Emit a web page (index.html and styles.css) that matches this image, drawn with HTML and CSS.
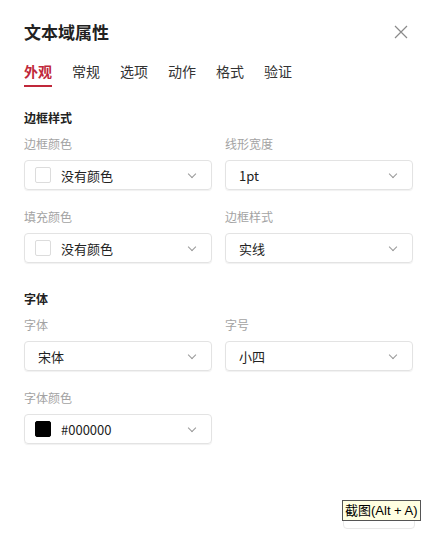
FILE: index.html
```html
<!DOCTYPE html>
<html lang="zh-CN">
<head>
    <meta charset="UTF-8">
    <meta name="viewport" content="width=device-width, initial-scale=1.0">
    <title>文本域属性</title>
    <link rel="stylesheet" href="styles.css">
</head>
<body>

    <div class="dialog">
        <div class="header">
            <h1>文本域属性</h1>
            <span class="close">
                <svg width="14" height="14" viewBox="0 0 14 14"><path d="M1 1L13 13M13 1L1 13" stroke="#8a8a8a" stroke-width="1.2" fill="none"/></svg>
            </span>
        </div>

        <div class="tabs">
            <span class="tab active">外观</span>
            <span class="tab">常规</span>
            <span class="tab">选项</span>
            <span class="tab">动作</span>
            <span class="tab">格式</span>
            <span class="tab">验证</span>
        </div>

        <!-- 边框 -->
        <h2>边框样式</h2>
        <div class="grid">
            <div class="field">
                <label>边框颜色</label>
                <div class="select"><span class="swatch"></span><span class="value">没有颜色</span><span class="arrow"></span></div>
            </div>
            <div class="field">
                <label>线形宽度</label>
                <div class="select"><span class="value">1pt</span><span class="arrow"></span></div>
            </div>
            <div class="field">
                <label>填充颜色</label>
                <div class="select"><span class="swatch"></span><span class="value">没有颜色</span><span class="arrow"></span></div>
            </div>
            <div class="field">
                <label>边框样式</label>
                <div class="select"><span class="value">实线</span><span class="arrow"></span></div>
            </div>
        </div>

        <!-- 字体 -->
        <h2 class="second">字体</h2>
        <div class="grid">
            <div class="field">
                <label>字体</label>
                <div class="select"><span class="value">宋体</span><span class="arrow"></span></div>
            </div>
            <div class="field">
                <label>字号</label>
                <div class="select"><span class="value">小四</span><span class="arrow"></span></div>
            </div>
            <div class="field">
                <label>字体颜色</label>
                <div class="select"><span class="swatch black"></span><span class="value">#000000</span><span class="arrow"></span></div>
            </div>
        </div>

        <div class="footer">
            <span class="btn"></span>
            <span class="tooltip">截图(Alt + A)</span>
        </div>
    </div>

</body>
</html>
```

FILE: styles.css
```css
body {
    margin: 0;
    background: #fff;
    font-family: "Noto Sans CJK SC", "Noto Sans", sans-serif;
    color: #333;
}
.dialog {
    position: relative;
    height: 552px;
    padding: 20px 25px 0 24px;
    box-sizing: border-box;
}
.header {
    display: flex;
    align-items: center;
    justify-content: space-between;
    height: 24px;
}
h1 {
    margin: 0;
    font-size: 17px;
    font-weight: bold;
    line-height: 24px;
    color: #222;
}
.close {
    display: flex;
    margin-right: 5px;
}
.tabs {
    display: flex;
    gap: 20px;
    margin-top: 17px;
}
.tab {
    font-size: 14px;
    line-height: 20px;
    height: 24px;
    color: #333;
}
.tab.active {
    color: #c0283a;
    font-weight: bold;
    border-bottom: 2px solid #c0283a;
}
h2 {
    margin: 21px 0 6px;
    font-size: 12px;
    font-weight: bold;
    line-height: 20px;
    color: #222;
}
h2.second {
    margin-top: 26px;
}
.grid {
    display: grid;
    grid-template-columns: 1fr 1fr;
    column-gap: 13px;
    row-gap: 17px;
}
.field label {
    display: block;
    font-size: 12px;
    line-height: 20px;
    color: #a3a3a3;
    margin-bottom: 6px;
}
.select {
    display: flex;
    align-items: center;
    height: 30px;
    box-sizing: border-box;
    border: 1px solid #e3e3e3;
    border-radius: 4px;
    box-shadow: 0 1px 1px rgba(0,0,0,0.06);
    padding: 0 12px 0 10px;
}
.swatch {
    width: 16px;
    height: 16px;
    box-sizing: border-box;
    border: 1px solid #dcdcdc;
    border-radius: 2px;
    margin-right: 7px;
}
.swatch.black {
    background: #000;
    border-color: #000;
}
.value {
    flex: 1;
    font-size: 13px;
    color: #222;
    padding-left: 3px;
}
.arrow {
    width: 5px;
    height: 5px;
    border-right: 1px solid #999;
    border-bottom: 1px solid #999;
    transform: rotate(45deg);
    margin: 0 4px 3px 0;
}
.footer .btn {
    position: absolute;
    left: 343px;
    top: 503px;
    width: 70px;
    height: 24px;
    border: 1px solid #e8e8e8;
    border-radius: 4px;
}
.tooltip {
    position: absolute;
    left: 342px;
    top: 500px;
    padding: 0 2px;
    height: 21px;
    line-height: 19px;
    box-sizing: border-box;
    background: #ffffe1;
    border: 1px solid #555;
    font-size: 13px;
    color: #000;
    font-family: "Liberation Sans", "Noto Sans CJK SC", sans-serif;
}
```
